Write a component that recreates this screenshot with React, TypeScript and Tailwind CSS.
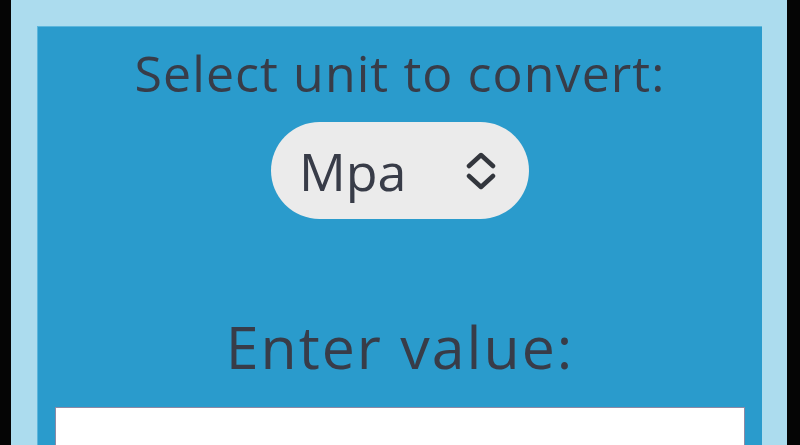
import React from "react";

function UpDownChevron() {
  return (
    <svg width="30" height="40" viewBox="0 0 30 40" fill="none">
      <path d="M3 15 L15 4 L27 15" stroke="#33363d" strokeWidth="4.5" strokeLinecap="round" strokeLinejoin="round" />
      <path d="M3 25 L15 36 L27 25" stroke="#33363d" strokeWidth="4.5" strokeLinecap="round" strokeLinejoin="round" />
    </svg>
  );
}

export default function App() {
  return (
    <div className="w-[800px] h-[445px] overflow-hidden bg-[#050505] pl-[11px] pr-[13px]" style={{ fontFamily: '"Open Sans", "Noto Sans", sans-serif' }}>
      <div className="h-full bg-[#acdcee] pt-[26px] pl-[26px] pr-[25px]">
        <div className="h-full bg-[#2a9bcc] border-t border-l border-[#5cb6dc] flex flex-col items-center text-[#383c48]">
          <div className="shrink-0 mt-[16px] text-[50px] leading-[60px] tracking-[1.1px]">Select unit to convert:</div>
          <div className="shrink-0 mt-[19px] w-[258px] h-[97px] rounded-full bg-[#ebebeb] flex items-center pl-[28px] pr-[33px] justify-between">
            <span className="text-[52px] leading-none">Mpa</span>
            <UpDownChevron />
          </div>
          <div className="shrink-0 mt-[92px] text-[59px] leading-[70px] tracking-[2px]">Enter value:</div>
          <div className="shrink-0 mt-[26px] self-stretch mx-[17px] h-[60px] bg-white border border-[#8c8aa6]" />
        </div>
      </div>
    </div>
  );
}
